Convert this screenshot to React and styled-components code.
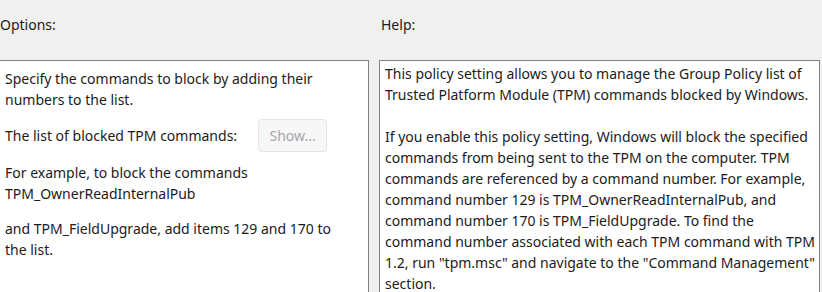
import React from "react";
import styled, { createGlobalStyle } from "styled-components";

const Global = createGlobalStyle`
  html, body { margin: 0; padding: 0; background: #f0f0f0; overflow: hidden; }
  body { font-family: "Noto Sans", "Open Sans", sans-serif; color: #1b1b1b; }
`;

const Page = styled.div`
  display: grid;
  grid-template-columns: 371px 441px;
  grid-template-rows: 60px 232px;
  column-gap: 10px;
  margin-left: -2px;
  width: 824px;
  height: 292px;
  overflow: hidden;
`;

const Label = styled.div`
  font-size: 14px;
  padding-left: ${(p) => p.$indent}px;
  padding-top: 15px;
  line-height: 20px;
`;

const Panel = styled.div`
  background: #fff;
  border: 1px solid #828282;
  border-bottom: none;
  height: 240px;
  box-sizing: border-box;
  padding: ${(p) => p.$pad};
  font-size: 14px;
  line-height: 21px;
`;

const Para = styled.p`
  margin: 0 0 ${(p) => p.$gap ?? 14}px 0;
`;

const Row = styled.div`
  display: flex;
  align-items: center;
  gap: 21px;
  margin: 0 0 ${(p) => p.$gap}px 0;
  height: 33px;
`;

const ShowButton = styled.button`
  font: inherit;
  font-size: 14px;
  width: 69px;
  height: 33px;
  border: 1px solid #e4e4e4;
  border-radius: 4px;
  background: #f7f7f7;
  color: #a6a6a6;
  padding: 0;
`;

const Line = styled.span`
  display: block;
  white-space: nowrap;
`;

const help1 = [
  "This policy setting allows you to manage the Group Policy list of",
  "Trusted Platform Module (TPM) commands blocked by Windows.",
];
const help2 = [
  "If you enable this policy setting, Windows will block the specified",
  "commands from being sent to the TPM on the computer. TPM",
  "commands are referenced by a command number. For example,",
  "command number 129 is TPM_OwnerReadInternalPub, and",
  "command number 170 is TPM_FieldUpgrade. To find the",
  "command number associated with each TPM command with TPM",
  "1.2, run \"tpm.msc\" and navigate to the \"Command Management\"",
  "section.",
];

export default function App() {
  return (
    <>
      <Global />
      <Page>
        <Label $indent={2}>Options:</Label>
        <Label $indent={2}>Help:</Label>
        <Panel $pad="7px 22px 0 6px">
          <Para $gap={9}>
            Specify the commands to block by adding their numbers to the list.
          </Para>
          <Row $gap={10}>
            <span>The list of blocked TPM commands:</span>
            <ShowButton disabled>Show...</ShowButton>
          </Row>
          <Para>
            For example, to block the commands
            <br />
            TPM_OwnerReadInternalPub
          </Para>
          <Para>
            and TPM_FieldUpgrade, add items 129 and 170 to the list.
          </Para>
        </Panel>
        <Panel $pad="2px 6px 0 5px">
          <Para $gap={21}>
            {help1.map((l) => (
              <Line key={l}>{l}</Line>
            ))}
          </Para>
          <Para $gap={0}>
            {help2.map((l) => (
              <Line key={l}>{l}</Line>
            ))}
          </Para>
        </Panel>
      </Page>
    </>
  );
}
